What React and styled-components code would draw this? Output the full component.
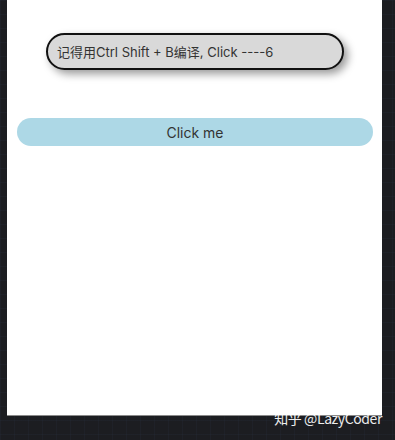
import React from "react";
import styled, { createGlobalStyle } from "styled-components";

const Global = createGlobalStyle`
  html, body { margin: 0; padding: 0; }
  body {
    width: 395px;
    height: 440px;
    overflow: hidden;
    background-color: #1c1d21;
    background-image:
      linear-gradient(rgba(70, 90, 130, 0.07) 1px, transparent 1px),
      linear-gradient(90deg, rgba(70, 90, 130, 0.07) 1px, transparent 1px);
    background-size: 14px 14px;
    font-family: Inter, "Noto Sans CJK SC", sans-serif;
  }
`;

const Stage = styled.div`
  position: relative;
  width: 395px;
  height: 440px;
`;

const Panel = styled.div`
  margin-left: 7px;
  width: 375px;
  height: 416px;
  background: #ffffff;
  border-bottom: 1px solid #8a8a8a;
  box-sizing: border-box;
  display: flex;
  flex-direction: column;
  padding-top: 33px;
`;

const Pill = styled.div`
  margin-left: 39px;
  width: 298px;
  height: 37px;
  box-sizing: border-box;
  border: 2px solid #111;
  border-radius: 19px;
  background: #d9d9d9;
  box-shadow: 4px 4px 8px rgba(0, 0, 0, 0.4);
  display: flex;
  align-items: center;
  padding-left: 9px;
  font-size: 13px;
  color: #333;
  white-space: nowrap;
`;

const Button = styled.button`
  margin-top: 48px;
  margin-left: 10px;
  width: 356px;
  height: 28px;
  border: none;
  border-radius: 14px;
  background: #add8e6;
  color: #333;
  font-family: Inter, "Noto Sans CJK SC", sans-serif;
  font-size: 14px;
  padding: 0;
  cursor: pointer;
`;

const Watermark = styled.div`
  position: absolute;
  right: 13px;
  top: 408px;
  color: #ffffff;
  font-family: "Noto Sans CJK SC", sans-serif;
  font-size: 14px;
  letter-spacing: -0.4px;
  opacity: 0.92;
`;

export default function App() {
  return (
    <>
      <Global />
      <Stage>
        <Panel>
          <Pill>记得用Ctrl Shift + B编译, Click ----6</Pill>
          <Button>Click me</Button>
        </Panel>
        <Watermark>知乎 @LazyCoder</Watermark>
      </Stage>
    </>
  );
}
